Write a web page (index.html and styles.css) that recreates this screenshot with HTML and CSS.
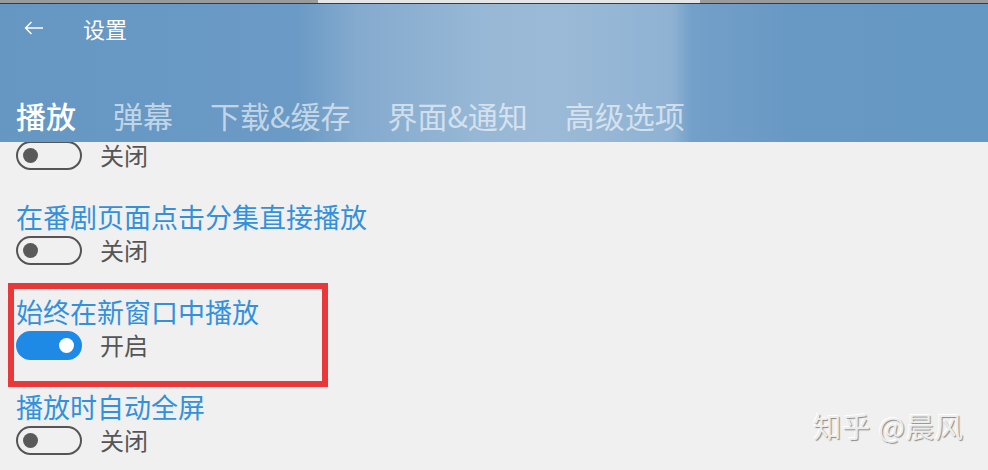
FILE: index.html
```html
<!DOCTYPE html>
<html lang="zh-CN">
  <head>
    <meta charset="UTF-8" />
    <title>设置</title>
    <link rel="stylesheet" href="styles.css">
  </head>
  <body>
    <div class="strip">
      <div class="strip-dark"></div>
      <div class="strip-light"></div>
      <div class="strip-dark grow"></div>
    </div>
    <header class="header">
      <div class="titlebar">
        <svg class="back" width="20" height="14" viewBox="0 0 20 14">
          <path d="M19 7H1.5M7.5 1L1.5 7l6 6" fill="none" stroke="#fff" stroke-width="1.4" />
        </svg>
        <span class="title">设置</span>
      </div>
      <nav class="tabs">
        <span class="tab active">播放</span>
        <span class="tab">弹幕</span>
        <span class="tab">下载&amp;缓存</span>
        <span class="tab">界面&amp;通知</span>
        <span class="tab">高级选项</span>
      </nav>
    </header>

    <main class="viewport">
      <div class="list">
        <!-- scrolled: only the tail of the first item is visible -->
        <div class="item partial">
          <div class="switch-row">
            <span class="switch"><span class="knob"></span></span>
            <span class="state">关闭</span>
          </div>
        </div>
        <div class="item">
          <div class="item-title">在番剧页面点击分集直接播放</div>
          <div class="switch-row">
            <span class="switch"><span class="knob"></span></span>
            <span class="state">关闭</span>
          </div>
        </div>
        <div class="item marked">
          <div class="item-title">始终在新窗口中播放</div>
          <div class="switch-row">
            <span class="switch on"><span class="knob"></span></span>
            <span class="state">开启</span>
          </div>
        </div>
        <div class="item">
          <div class="item-title">播放时自动全屏</div>
          <div class="switch-row">
            <span class="switch"><span class="knob"></span></span>
            <span class="state">关闭</span>
          </div>
        </div>
      </div>
      <div class="watermark">知乎 @晨风</div>
    </main>
  </body>
</html>
```

FILE: styles.css
```css
*,
*::before,
*::after {
  margin: 0;
  padding: 0;
  box-sizing: border-box;
}

body {
  width: 988px;
  height: 470px;
  overflow: hidden;
  background-color: #f0f0f0;
  font-family: "Noto Sans CJK SC", "Noto Sans", sans-serif;
}

.strip {
  height: 4px;
  display: flex;
  border-bottom: 1px solid #3a3a3a;
}

.strip-dark {
  width: 318px;
  background-color: #9a9a9a;
}

.strip-light {
  width: 382px;
  background-color: #e6e6e6;
}

.grow {
  flex: 1;
}

.header {
  height: 138px;
  display: flex;
  flex-direction: column;
  justify-content: space-between;
  background: linear-gradient(
    to right,
    #6697c3 0%,
    #6a9ac5 30%,
    #84aace 36%,
    #96b7d5 48%,
    #9bbad7 56%,
    #8fb2d3 68%,
    #73a0c9 70%,
    #6898c4 80%,
    #6698c4 100%
  );
}

.titlebar {
  height: 48px;
  padding-left: 24px;
  display: flex;
  align-items: center;
}

.back {
  margin-right: 39px;
}

.title {
  font-size: 22px;
  color: #fff;
}

.tabs {
  padding: 0 0 9px 16px;
  display: flex;
  gap: 37px;
}

.tab {
  font-size: 30px;
  line-height: 36px;
  color: rgba(255, 255, 255, 0.6);
}

.tab.active {
  color: #fff;
  font-weight: 500;
}

.viewport {
  position: relative;
  height: 328px;
  overflow: hidden;
}

.list {
  margin-top: -3px;
  padding-left: 16px;
}

.item {
  position: relative;
  height: 95px;
}

.item.partial {
  height: 61px;
}

.item.marked::after {
  content: "";
  position: absolute;
  top: -12px;
  left: -8px;
  width: 320px;
  height: 104px;
  border: 6px solid #e8383a;
}

.item-title {
  font-size: 27px;
  line-height: 34px;
  color: #3290dd;
}

.switch-row {
  height: 32px;
  display: flex;
  align-items: center;
  gap: 18px;
}

.switch {
  width: 66px;
  height: 29px;
  border: 2.5px solid #555;
  border-radius: 15px;
  padding: 0 5px;
  display: flex;
  align-items: center;
}

.knob {
  width: 15px;
  height: 15px;
  border-radius: 50%;
  background-color: #5a5a5a;
}

.switch.on {
  border-color: #1f8ae6;
  background-color: #1f8ae6;
  justify-content: flex-end;
  padding-right: 6px;
}

.switch.on .knob {
  background-color: #fff;
}

.state {
  font-size: 24px;
  line-height: 28px;
  color: #555;
}

.watermark {
  position: absolute;
  right: 24px;
  bottom: 24px;
  font-size: 28px;
  letter-spacing: 1px;
  color: #ededed;
  text-shadow: 1px 1px 1px #8a8a8a, -1px -1px 0 #ffffff;
}
```
